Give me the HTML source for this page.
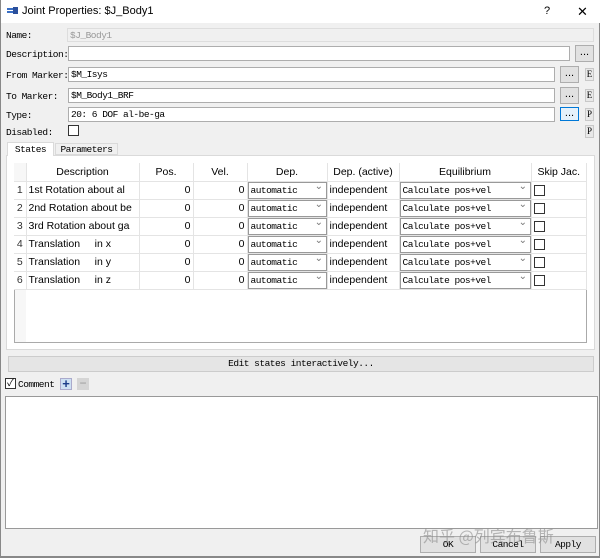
<!DOCTYPE html>
<html><head><meta charset="utf-8"><style>
*{box-sizing:border-box;margin:0;padding:0}
body{width:600px;height:558px;background:#f0f0f0;position:relative;overflow:hidden;font-family:"Liberation Sans","Noto Sans CJK SC",sans-serif;font-size:11px;color:#000;border-left:1px solid #888;border-right:1px solid #888}
.a{position:absolute}
.m{font-family:"Liberation Mono","Noto Sans CJK SC",monospace;font-size:9.5px;letter-spacing:-0.5px}
.lbl{left:5px}
.fld{background:#fff;border:1px solid #adadad;height:15px;padding-left:2px;line-height:13px}
.btn{background:#e1e1e1;border:1px solid #adadad;text-align:center}
.sm{width:9px;height:13px;background:#e8e8e8;border:1px solid #c8c8c8;font-size:9px;line-height:11px;text-align:center;font-family:"Liberation Serif",serif}
table{border-collapse:collapse;position:absolute;left:13px;top:163px;width:573px;background:#fff;font-size:10.5px;table-layout:fixed}
td,th{height:18px;border-right:1px solid #e4e4e4;border-bottom:1px solid #e4e4e4;font-weight:normal;white-space:nowrap;overflow:hidden;padding:0 2px}
td.n{background:#fff;text-align:center;padding:0;color:#333}
td.r{text-align:right}
.cb{display:inline-block;width:11px;height:11px;border:1px solid #333;background:#fff;vertical-align:middle}
.dd{border:1px solid #999;height:17px;line-height:15px;position:relative;padding-left:2px}
.dd:after{content:"⌄";position:absolute;right:3px;top:-3px;color:#777;font-size:10px}
</style></head><body>
<div class="a" style="left:0;top:0;width:600px;height:23px;background:#fff"></div>
<div class="a" style="left:6px;top:8px;width:6px;height:2px;background:#3a6fc4"></div>
<div class="a" style="left:6px;top:11px;width:6px;height:2px;background:#3a6fc4"></div>
<div class="a" style="left:12px;top:7px;width:5px;height:7px;background:#2a4f9c"></div>
<div class="a" style="left:21px;top:5px;font-size:11px">Joint Properties: $J_Body1</div>
<div class="a" style="left:543px;top:5px;font-size:11px">?</div>
<div class="a" style="left:576px;top:4px;font-size:13px">✕</div>

<div class="a m lbl" style="top:30px">Name:</div>
<div class="a m" style="left:69px;top:30px;color:#999">$J_Body1</div>
<div class="a" style="left:66px;top:28px;width:527px;height:14px;border:1px solid #ddd"></div>
<div class="a m lbl" style="top:49px">Description:</div>
<div class="a fld" style="left:67px;top:46px;width:502px"></div>
<div class="a btn" style="left:574px;top:45px;width:19px;height:17px;line-height:13px">...</div>
<div class="a m lbl" style="top:70px">From Marker:</div>
<div class="a fld m" style="left:67px;top:67px;width:487px">$M_Isys</div>
<div class="a btn" style="left:559px;top:66px;width:19px;height:17px;line-height:13px">...</div>
<div class="a sm" style="left:584px;top:68px">E</div>
<div class="a m lbl" style="top:91px">To Marker:</div>
<div class="a fld m" style="left:67px;top:88px;width:487px">$M_Body1_BRF</div>
<div class="a btn" style="left:559px;top:87px;width:19px;height:17px;line-height:13px">...</div>
<div class="a sm" style="left:584px;top:89px">E</div>
<div class="a m lbl" style="top:110px">Type:</div>
<div class="a fld m" style="left:67px;top:107px;width:487px">20: 6 DOF al-be-ga</div>
<div class="a btn" style="left:559px;top:107px;width:19px;height:14px;line-height:10px;border-color:#0078d7;background:#e5f1fb">...</div>
<div class="a sm" style="left:584px;top:108px">P</div>
<div class="a m lbl" style="top:127px">Disabled:</div>
<div class="a" style="left:67px;top:125px;width:11px;height:11px;border:1px solid #333;background:#fff"></div>
<div class="a sm" style="left:584px;top:125px">P</div>

<div class="a" style="left:5px;top:155px;width:589px;height:195px;background:#fff;border:1px solid #dadada"></div>
<div class="a m" style="left:6px;top:142px;width:47px;height:14px;background:#fff;border:1px solid #dadada;border-bottom:none;text-align:center;line-height:13px">States</div>
<div class="a m" style="left:54px;top:143px;width:63px;height:12px;background:#f0f0f0;border:1px solid #dadada;text-align:center;line-height:11px">Parameters</div>
<div class="a" style="left:13px;top:163px;width:573px;height:180px;background:#fff;border:1px solid #aaa"></div>
<div class="a" style="left:14px;top:164px;width:11px;height:178px;background:#f7f7f7"></div>
<table>
<colgroup><col style="width:12px"><col style="width:113px"><col style="width:54px"><col style="width:54px"><col style="width:80px"><col style="width:72px"><col style="width:132px"><col></colgroup>
<tr><th style="background:#f7f7f7"></th><th>Description</th><th>Pos.</th><th>Vel.</th><th>Dep.</th><th>Dep. (active)</th><th>Equilibrium</th><th>Skip Jac.</th></tr>
<tr><td class="n">1</td><td>1st Rotation about al</td><td class="r">0</td><td class="r">0</td><td style="padding:0"><div class="dd m">automatic</div></td><td>independent</td><td style="padding:0"><div class="dd m">Calculate pos+vel</div></td><td><span class="cb"></span></td></tr>
<tr><td class="n">2</td><td>2nd Rotation about be</td><td class="r">0</td><td class="r">0</td><td style="padding:0"><div class="dd m">automatic</div></td><td>independent</td><td style="padding:0"><div class="dd m">Calculate pos+vel</div></td><td><span class="cb"></span></td></tr>
<tr><td class="n">3</td><td>3rd Rotation about ga</td><td class="r">0</td><td class="r">0</td><td style="padding:0"><div class="dd m">automatic</div></td><td>independent</td><td style="padding:0"><div class="dd m">Calculate pos+vel</div></td><td><span class="cb"></span></td></tr>
<tr><td class="n">4</td><td>Translation &nbsp;&nbsp;&nbsp; in x</td><td class="r">0</td><td class="r">0</td><td style="padding:0"><div class="dd m">automatic</div></td><td>independent</td><td style="padding:0"><div class="dd m">Calculate pos+vel</div></td><td><span class="cb"></span></td></tr>
<tr><td class="n">5</td><td>Translation &nbsp;&nbsp;&nbsp; in y</td><td class="r">0</td><td class="r">0</td><td style="padding:0"><div class="dd m">automatic</div></td><td>independent</td><td style="padding:0"><div class="dd m">Calculate pos+vel</div></td><td><span class="cb"></span></td></tr>
<tr><td class="n">6</td><td>Translation &nbsp;&nbsp;&nbsp; in z</td><td class="r">0</td><td class="r">0</td><td style="padding:0"><div class="dd m">automatic</div></td><td>independent</td><td style="padding:0"><div class="dd m">Calculate pos+vel</div></td><td><span class="cb"></span></td></tr>
</table>

<div class="a btn m" style="left:7px;top:356px;width:586px;height:16px;line-height:14px;background:#e5e5e5;border-color:#ccc">Edit states interactively...</div>
<div class="a" style="left:4px;top:378px;width:11px;height:11px;border:1px solid #333;background:#fff;font-size:10px;line-height:9px;text-align:center">✓</div>
<div class="a m" style="left:17px;top:379px">Comment</div>
<div class="a" style="left:59px;top:378px;width:12px;height:12px;background:#cde0f3;border:1px solid #aac;color:#1a3d8a;font-size:13px;line-height:10px;text-align:center;font-weight:bold">+</div>
<div class="a" style="left:76px;top:378px;width:12px;height:12px;background:#d5d5d5;color:#999;font-size:12px;line-height:10px;text-align:center">−</div>
<div class="a" style="left:4px;top:396px;width:593px;height:133px;background:#fff;border:1px solid #999"></div>

<div class="a btn m" style="left:419px;top:536px;width:56px;height:17px;line-height:15px">OK</div>
<div class="a btn m" style="left:479px;top:536px;width:56px;height:17px;line-height:15px">Cancel</div>
<div class="a btn m" style="left:539px;top:536px;width:56px;height:17px;line-height:15px">Apply</div>
<div class="a" style="left:422px;top:525px;z-index:5;font-size:16px;line-height:20px;color:rgba(140,140,140,0.6);font-family:'Noto Sans CJK SC',sans-serif;white-space:nowrap">知乎 @列宾布鲁斯</div>
<div class="a" style="left:0;top:556px;width:600px;height:2px;background:#888"></div>
</body></html>
